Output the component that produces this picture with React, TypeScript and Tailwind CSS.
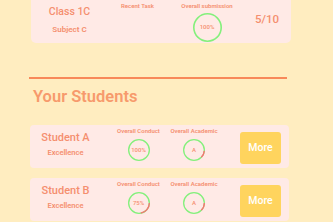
import React from "react";

const salmon = "text-[#f58f6f]";

const Ring = ({ label, size, stroke, red }: { label: string; size: number; stroke: number; red?: [number, number] }) => {
  const r = size / 2 - stroke / 2;
  const c = size / 2;
  const arc = (a0: number, a1: number) => {
    const p = (a: number) => {
      const rad = ((a - 90) * Math.PI) / 180;
      return `${c + r * Math.cos(rad)} ${c + r * Math.sin(rad)}`;
    };
    return `M ${p(a0)} A ${r} ${r} 0 ${a1 - a0 > 180 ? 1 : 0} 1 ${p(a1)}`;
  };
  return (
    <div className="relative flex items-center justify-center" style={{ width: size, height: size }}>
      <svg width={size} height={size} className="absolute inset-0">
        <circle cx={c} cy={c} r={r} fill="none" stroke="#84f07c" strokeWidth={stroke} />
        {red && <path d={arc(red[0], red[1])} fill="none" stroke="#f87171" strokeWidth={stroke} />}
      </svg>
      <span className={`text-[6px] font-medium leading-none ${salmon}`}>{label}</span>
    </div>
  );
};

const StudentCard = ({ name, conduct, conductRed, academicRed }: { name: string; conduct: string; conductRed?: [number, number]; academicRed?: [number, number] }) => (
  <div className="flex h-[43px] w-[259px] items-start rounded-[4px] bg-[#ffeae6]">
    <div className="flex w-[71px] flex-col items-center pt-[7px]">
      <span className={`text-[11px] font-medium leading-none ${salmon}`}>{name}</span>
      <span className={`mt-[6px] text-[7.5px] font-semibold leading-none ${salmon}`}>Excellence</span>
    </div>
    <div className="flex w-[75px] flex-col items-center pt-[3px]">
      <span className={`whitespace-nowrap text-[6px] font-semibold leading-none ${salmon}`}>Overall Conduct</span>
      <div className="mt-[5px]">
        <Ring label={conduct} size={22} stroke={1.3} red={conductRed} />
      </div>
    </div>
    <div className="flex w-[36px] flex-col items-center pt-[3px]">
      <span className={`whitespace-nowrap text-[6px] font-semibold leading-none ${salmon}`}>Overall Academic</span>
      <div className="mt-[5px]">
        <Ring label="A" size={22} stroke={1.3} red={academicRed} />
      </div>
    </div>
    <div className="ml-[28px] mt-[7px] flex h-[32px] w-[41px] items-center justify-center rounded-[3px] bg-[#ffd45e]">
      <span className="text-[10.5px] font-medium leading-none text-white">More</span>
    </div>
  </div>
);

export default function App() {
  return (
    <div className="h-[222px] w-[333px] overflow-hidden bg-[#ffedc0] pl-[30px]" style={{ fontFamily: "Roboto, 'Noto Sans', sans-serif" }}>
      <div className="ml-[1px] flex h-[43px] w-[260px] items-start rounded-b-[5px] bg-[#ffeae6]">
        <div className="flex w-[77px] flex-col items-center pt-[7px]">
          <span className={`text-[10.5px] font-medium leading-none ${salmon}`}>Class 1C</span>
          <span className={`mt-[8px] text-[8px] font-semibold leading-none ${salmon}`}>Subject C</span>
        </div>
        <div className="flex w-[59px] justify-center pt-[3px]">
          <span className={`whitespace-nowrap text-[6px] font-semibold leading-none ${salmon}`}>Recent Task</span>
        </div>
        <div className="flex w-[80px] flex-col items-center pt-[3px]">
          <span className={`whitespace-nowrap text-[6px] font-semibold leading-none ${salmon}`}>Overall submission</span>
          <div className="mt-[3.5px]">
            <Ring label="100%" size={29} stroke={1.6} />
          </div>
        </div>
        <div className="flex w-[40px] justify-center pt-[14px]">
          <span className={`text-[11.5px] font-medium leading-none ${salmon}`}>5/10</span>
        </div>
      </div>
      <div className="-ml-[1px] mt-[34px] h-[2px] w-[258px] bg-[#f8895a]" />
      <div className="mt-[10px] flex pl-[3px]">
        <span className="text-[16.5px] font-semibold leading-none text-[#f79a6c]">Your Students</span>
      </div>
      <div className="mt-[19.5px] flex flex-col gap-[10px]">
        <StudentCard name="Student A" conduct="100%" academicRed={[95, 135]} />
        <StudentCard name="Student B" conduct="75%" conductRed={[90, 170]} academicRed={[90, 135]} />
      </div>
    </div>
  );
}
